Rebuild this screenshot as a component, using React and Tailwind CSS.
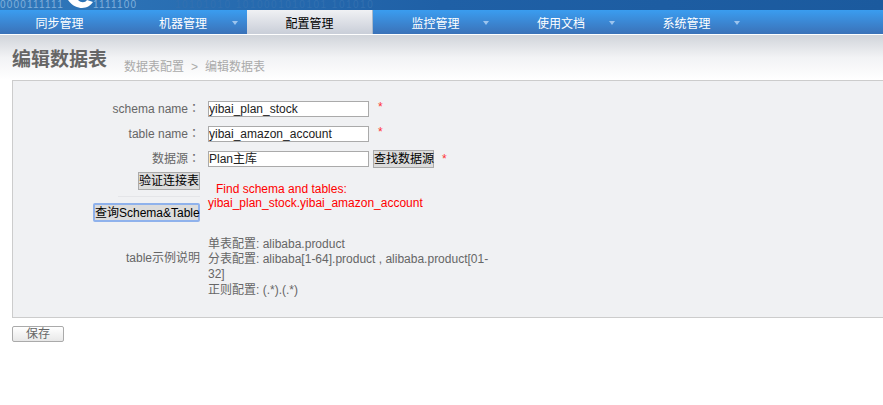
import React from 'react';

const cjk = "font-['Liberation_Sans','Noto_Sans_CJK_SC',sans-serif]";

const menus = [
  { name: '同步管理', w: 'w-[119px]', arrow: false },
  { name: '机器管理', w: 'w-[128px]', arrow: true },
  { name: '配置管理', w: 'w-[126px]', active: true },
  { name: '监控管理', w: 'w-[125px]', arrow: true },
  { name: '使用文档', w: 'w-[126px]', arrow: true },
  { name: '系统管理', w: 'w-[125px]', arrow: true },
];

const NavItem = ({ item }) => (
  <div
    className={`relative flex h-[24px] items-center justify-center pt-[3px] text-[12px] ${item.w} ${
      item.active
        ? 'border-r border-[#a9b8c9] bg-gradient-to-b from-[#f0f1f4] to-[#c9ced8] text-black'
        : 'text-white'
    }`}
  >
    <span>{item.name}</span>
    {item.arrow && (
      <span className="absolute right-[9px] top-[11px] h-0 w-0 border-x-[3px] border-t-[4px] border-x-transparent border-t-[#9cc4ee]" />
    )}
  </div>
);

const Row = ({ label, value, children }) => (
  <div className="flex h-[25px] items-center">
    <div className="w-[187px] text-right text-[12px] text-[#666]">
      {label}
      <span className="font-['Noto_Sans_CJK_TC',sans-serif]">：</span>
    </div>
    <input
      readOnly
      value={value}
      className="ml-[8px] h-[16px] w-[161px] border border-[#aaa] bg-white pl-0 text-[12px] text-[#222] outline-none"
    />
    {children}
  </div>
);

const ActionButton = ({ children, className = '' }) => (
  <button className={`whitespace-nowrap bg-[#dcdcdc] px-0 text-[12px] leading-none text-black ${className}`}>
    {children}
  </button>
);

export default function App() {
  return (
    <div className={`h-[405px] w-[883px] overflow-hidden bg-white ${cjk}`}>
      <div className="relative h-[10px] overflow-hidden bg-gradient-to-r from-[#3078bb] via-[#1f60a6] to-[#1b5a9e]">
        <div className="absolute left-[0px] top-0 whitespace-nowrap text-[10px] leading-[10px] tracking-[1.2px] text-[#7fb0dc]">
          0000111111
        </div>
        <div className="absolute left-[93px] top-0 whitespace-nowrap text-[10px] leading-[10px] tracking-[1.2px] text-[#7fb0dc]">
          1111100
        </div>
        <div className="absolute left-[175px] top-0 whitespace-nowrap text-[10px] leading-[10px] tracking-[1.5px] text-[#3270b0]">
          10101010 1010001010101 101010
        </div>
        <svg className="absolute left-[66px] top-0" width="28" height="10" viewBox="0 0 28 10">
          <path d="M2 0 C6 6 12 8 16 8 C21 8 25 5 27 2 L21 0 C19 3 15 3 12 0 Z" fill="#fff" />
        </svg>
      </div>
      <div className="flex h-[25px] border-b border-white bg-gradient-to-b from-[#3a9df0] to-[#3a72b8] pl-0">
        {menus.map((m) => (
          <NavItem key={m.name} item={m} />
        ))}
      </div>
      <div className="h-[45px] bg-gradient-to-b from-[#d0d4da] via-[#f2f3f5] to-white px-[12px]">
        <div className="flex items-end pt-[13px]">
          <h1 className="text-[19px] font-bold leading-[24px] text-[#666]">编辑数据表</h1>
          <div className="mb-[-4px] ml-[17px] text-[12px] text-[#aaa]">
            数据表配置<span className="mx-[7px]">&gt;</span>编辑数据表
          </div>
        </div>
      </div>
      <div className="ml-[12px] h-[238px] border border-r-0 border-[#ccc] bg-[#f0f1f3] pt-[15px]">
        <Row label="schema name" value="yibai_plan_stock">
          <span className="ml-[9px] mt-[-3px] text-[12px] text-[#f33]">*</span>
        </Row>
        <Row label="table name" value="yibai_amazon_account">
          <span className="ml-[9px] mt-[-3px] text-[12px] text-[#f33]">*</span>
        </Row>
        <Row label="数据源" value="Plan主库">
          <ActionButton className="ml-[4px] h-[18px] w-[61px] border border-[#aaa]">查找数据源</ActionButton>
          <span className="ml-[8px] text-[12px] text-[#f33]">*</span>
        </Row>
        <div className="mt-[1px] flex">
          <div className="flex w-[187px] flex-col items-end">
            <ActionButton className="h-[18px] w-[62px] border border-[#aaa]">验证连接表</ActionButton>
            <div className="mt-[6px] h-px w-[82px] bg-[#e4e5e8]" />
            <ActionButton className="mt-[6px] h-[19px] w-[107px] rounded-[2px] border-2 border-[#8fb2ec]">
              查询Schema&amp;Table
            </ActionButton>
          </div>
          <div className="ml-[8px] pt-[10px] text-[12px] leading-[14px] text-[#f00]">
            <div className="pl-[8px]">Find schema and tables:</div>
            <div>yibai_plan_stock.yibai_amazon_account</div>
          </div>
        </div>
        <div className="mt-[14px] flex">
          <div className="flex w-[187px] items-center justify-end pb-[18px] text-[12px] text-[#666]">table示例说明</div>
          <div className="ml-[8px] w-[285px] text-[12px] text-[#666]">
            <div className="leading-[16px]">单表配置: alibaba.product</div>
            <div className="leading-[15px]">分表配置: alibaba[1-64].product , alibaba.product[01-32]</div>
            <div className="leading-[16px]">正则配置: (.*).(.*)</div>
          </div>
        </div>
      </div>
      <div className="px-[12px] pt-[8px]">
        <button className="block h-[16px] w-[52px] rounded-[2px] border border-[#aaa] bg-gradient-to-b from-white to-[#e8e8e8] text-[12px] leading-none text-[#666]">
          保存
        </button>
      </div>
    </div>
  );
}
